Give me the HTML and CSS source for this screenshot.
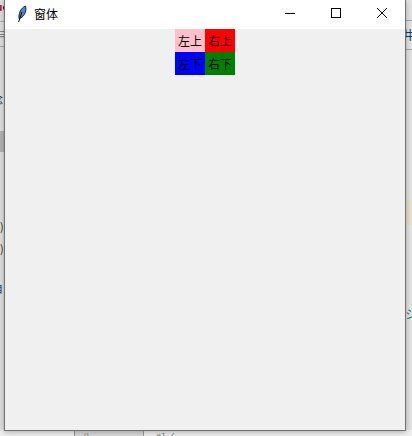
FILE: index.html
```html
<!DOCTYPE html>
<html lang="zh">
<head>
<meta charset="utf-8">
<title>窗体</title>
<link rel="stylesheet" href="styles.css">
</head>
<body>
<div class="desktop">
  <div class="bg-left">
    <span class="bg-rule bg-rule-a"></span>
    <span class="bg-rule bg-rule-b"></span>
    <span class="bg-mark bg-mark-gray"></span>
    <span class="bg-char bg-c0"><span class="red-text">u</span><span class="blue-text">e</span></span>
    <span class="bg-char bg-c5">≡</span>
    <span class="bg-char bg-c1">念</span>
    <span class="bg-char bg-c2">)</span>
    <span class="bg-char bg-c3">)</span>
    <span class="bg-char bg-c4">自</span>
  </div>
  <div class="bg-right">
    <span class="bg-rule bg-rule-c"></span>
    <span class="bg-rule bg-rule-d"></span>
    <span class="bg-hash">井</span>
    <span class="bg-note"></span>
    <span class="bg-teal">シ</span>
  </div>
  <div class="bg-bottom">
    <span class="bg-tab"><span class="bg-status bg-status-a">八</span></span>
    <span class="bg-status bg-status-b">#1 ✓</span>
  </div>
  <div class="window">
    <header class="titlebar">
      <svg class="feather" width="10" height="17" viewBox="0 0 10 17">
        <path d="M2 13.5 C1.5 9 3.5 3 8.5 1 C9.8 5 8 11 3.5 13 Z" fill="#4f86c6" stroke="#12233c" stroke-width="1"/>
        <path d="M1.6 17 L5 7" stroke="#000" stroke-width="1" fill="none"/>
      </svg>
      <span class="title">窗体</span>
      <div class="controls">
        <svg class="ctl" width="46" height="29" viewBox="0 0 46 29"><path d="M18 13.5 H28" stroke="#000" stroke-width="1"/></svg>
        <svg class="ctl" width="46" height="29" viewBox="0 0 46 29"><rect x="18.5" y="8.5" width="9" height="9" fill="none" stroke="#000" stroke-width="1"/></svg>
        <svg class="ctl" width="46" height="29" viewBox="0 0 46 29"><path d="M18 8 L28 18 M28 8 L18 18" stroke="#000" stroke-width="1" fill="none"/></svg>
      </div>
    </header>
    <main class="content">
      <div class="grid">
        <div class="cell pink">左上</div>
        <div class="cell red">右上</div>
        <div class="cell blue">左下</div>
        <div class="cell green">右下</div>
      </div>
    </main>
  </div>
</div>
</body>
</html>
```

FILE: styles.css
```css
* { box-sizing: border-box; }
html, body { margin: 0; padding: 0; }
body { width: 412px; height: 436px; overflow: hidden; background: #fff; }
.desktop {
  position: relative;
  width: 412px;
  height: 436px;
  overflow: hidden;
  background: #f4f4f4;
  font-family: "Noto Sans CJK SC", "Noto Sans", sans-serif;
}
.bg-left, .bg-right, .bg-bottom { position: absolute; }
.bg-left { left: 0; top: 0; width: 5px; height: 436px; background: #e2e2e2; overflow: hidden; }
.bg-right { left: 405px; top: 0; width: 7px; height: 436px; background: #e4e4e4; overflow: hidden; }
.bg-bottom { left: 0; top: 430px; width: 412px; height: 6px; background: #f0f0f0; overflow: hidden; }
.bg-rule, .bg-mark, .bg-char, .bg-hash, .bg-note, .bg-teal, .bg-tab, .bg-status { position: absolute; }
.bg-rule { left: 0; width: 100%; height: 1px; background: #a8a8a8; }
.bg-rule-a { top: 21px; }
.bg-rule-b { top: 46px; }
.bg-rule-c { top: 20px; }
.bg-rule-d { top: 49px; }
.bg-mark-gray { left: 0; top: 131px; width: 4px; height: 21px; background: #b4b4b4; }
.bg-char { font-size: 11px; line-height: 12px; color: #222; }
.bg-c0 { left: -4px; top: 1px; font-size: 10px; font-weight: 700; }
.red-text { color: #a01020; }
.blue-text { color: #1a2a80; }
.bg-c5 { left: -4px; top: 28px; font-size: 12px; color: #8a8a8a; font-weight: 700; }
.bg-c1 { left: -8px; top: 93px; }
.bg-c2 { top: 220px; left: 0; color: #3a3020; }
.bg-c3 { top: 242px; left: 0; color: #3a3020; }
.bg-c4 { top: 282px; left: -8px; color: #14427a; }
.bg-hash { left: -3px; top: 27px; font-size: 12px; line-height: 16px; color: #0b3a70; }
.bg-note { left: 0; top: 200px; width: 7px; height: 25px; background: #e6e2cc; }
.bg-teal { left: 0; top: 306px; font-size: 12px; line-height: 16px; color: #0b7a75; }
.bg-tab { left: 74px; top: 0; width: 70px; height: 6px; background: #dadada; border-left: 1px solid #999; border-right: 1px solid #999; }
.bg-status { font-size: 9px; line-height: 10px; color: #777; }
.bg-status-a { left: 7px; top: 2px; }
.bg-status-b { left: 156px; top: 2px; }
.window {
  position: absolute;
  left: 4px;
  top: 0;
  width: 402px;
  height: 431px;
  display: flex;
  flex-direction: column;
  background: #f0f0f0;
  border: 1px solid #6f6f6f;
  border-top: 0;
  box-shadow: 0 1px 6px rgba(0, 0, 0, 0.3);
}
.titlebar {
  flex: 0 0 29px;
  display: flex;
  align-items: center;
  background: #fff;
  padding-left: 12px;
}
.feather { flex: none; margin-right: 7px; margin-top: -2px; }
.title { font-size: 12px; line-height: 16px; color: #000; margin-top: -1px; }
.controls { margin-left: auto; display: flex; }
.ctl { display: block; }
.content { flex: 1; display: flex; justify-content: center; align-items: flex-start; }
.grid { display: grid; grid-template-columns: 30px 30px; grid-template-rows: 23px 23px; }
.cell {
  display: flex;
  align-items: center;
  justify-content: center;
  font-size: 12px;
  color: #000;
  line-height: 16px;
}
.pink { background: #ffc0cb; }
.red { background: #ff0000; }
.blue { background: #0000ff; }
.green { background: #008000; }
```
